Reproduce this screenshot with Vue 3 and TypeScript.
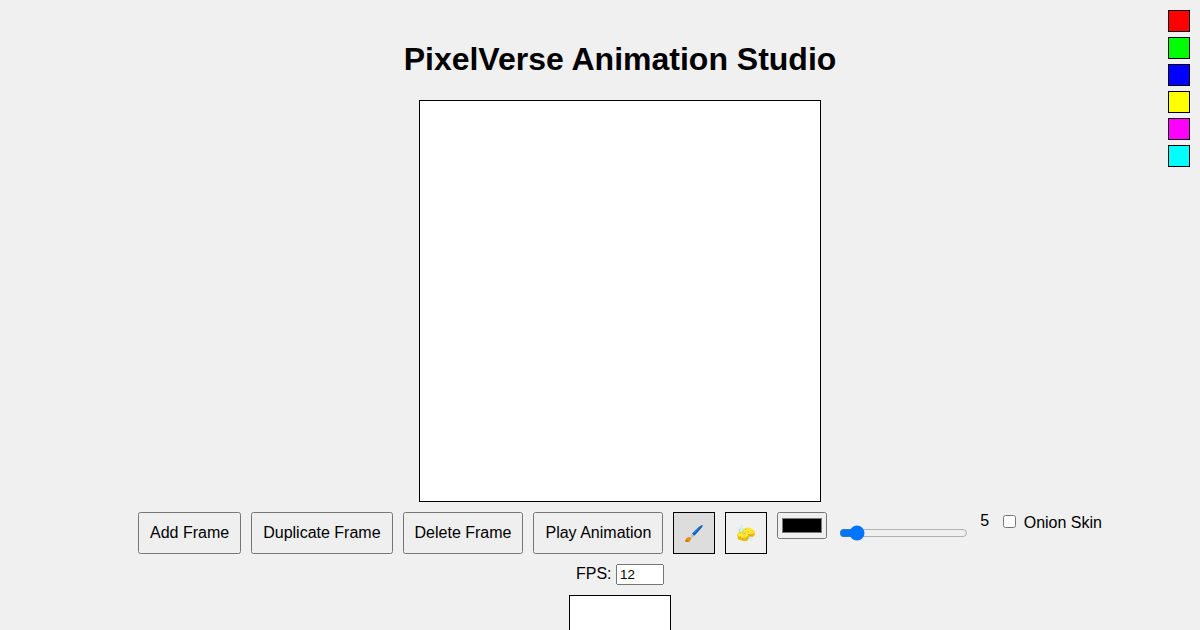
<script setup lang="ts">
import { ref } from 'vue'

const swatches = ['#ff0000', '#00ff00', '#0000ff', '#ffff00', '#ff00ff', '#00ffff']
const tool = ref<'brush' | 'eraser'>('brush')
const color = ref('#000000')
const size = ref(5)
const onion = ref(false)
const fps = ref(12)
const playing = ref(false)
const frames = ref<number[]>([1])
let nextId = 2

function addFrame() {
  frames.value.push(nextId++)
}
function deleteFrame() {
  if (frames.value.length > 1) frames.value.pop()
}
</script>

<template>
  <main class="studio">
    <h1>PixelVerse Animation Studio</h1>
    <canvas class="stage" width="400" height="400"></canvas>
    <div class="controls">
      <button type="button" class="action" @click="addFrame">Add Frame</button>
      <button type="button" class="action" @click="addFrame">Duplicate Frame</button>
      <button type="button" class="action" @click="deleteFrame">Delete Frame</button>
      <button type="button" class="action" @click="playing = !playing">Play Animation</button>
      <button type="button" class="tool" :class="{ active: tool === 'brush' }" aria-label="Brush" @click="tool = 'brush'">🖌️</button>
      <button type="button" class="tool" :class="{ active: tool === 'eraser' }" aria-label="Eraser" @click="tool = 'eraser'">🧽</button>
      <input v-model="color" type="color" aria-label="Brush color" />
      <input id="size" v-model.number="size" class="size" type="range" min="1" max="50" aria-label="Brush size" />
      <label for="size">{{ size }}</label>
      <label><input v-model="onion" type="checkbox" /> Onion Skin</label>
    </div>
    <div class="speed">
      <label for="fps">FPS: </label>
      <input id="fps" v-model.number="fps" class="fps" type="number" min="1" max="60" />
    </div>
    <div class="frames">
      <canvas v-for="id in frames" :key="id" class="thumb" width="100" height="100"></canvas>
    </div>
    <div class="palette">
      <button v-for="s in swatches" :key="s" type="button" class="swatch" :style="{ backgroundColor: s }" :aria-label="s" @click="color = s"></button>
    </div>
  </main>
</template>

<style>
body {
  background: #f0f0f0;
}
</style>

<style scoped>
.studio {
  display: flex;
  flex-direction: column;
  align-items: center;
  padding: 20px 0 20px 40px;
  font-family: "Liberation Sans", Arial, sans-serif;
  font-size: 16px;
  color: #000;
}
h1 {
  margin: 21px 0 22px;
  font-size: 32px;
}
.stage {
  border: 1px solid #000;
  background: #fff;
}
.controls {
  display: flex;
  flex-wrap: wrap;
  justify-content: center;
  gap: 10px;
  margin-top: 10px;
}
.action {
  padding: 10px;
  font-family: inherit;
  font-size: 16px;
}
.tool {
  width: 42px;
  height: 42px;
  padding: 0;
  border: 1px solid #000;
  background: #f0f0f0;
  font-family: inherit;
  font-size: 16px;
}
.tool.active {
  background: #ddd;
}
.speed {
  margin-top: 10px;
}
.fps {
  box-sizing: border-box;
  width: 48px;
}
.frames {
  display: flex;
  gap: 10px;
  margin-top: 10px;
}
.thumb {
  border: 1px solid #000;
  background: #fff;
}
.palette {
  position: fixed;
  top: 10px;
  right: 10px;
  display: flex;
  flex-direction: column;
  gap: 5px;
}
.swatch {
  width: 22px;
  height: 22px;
  padding: 0;
  border: 1px solid #000;
}
</style>
